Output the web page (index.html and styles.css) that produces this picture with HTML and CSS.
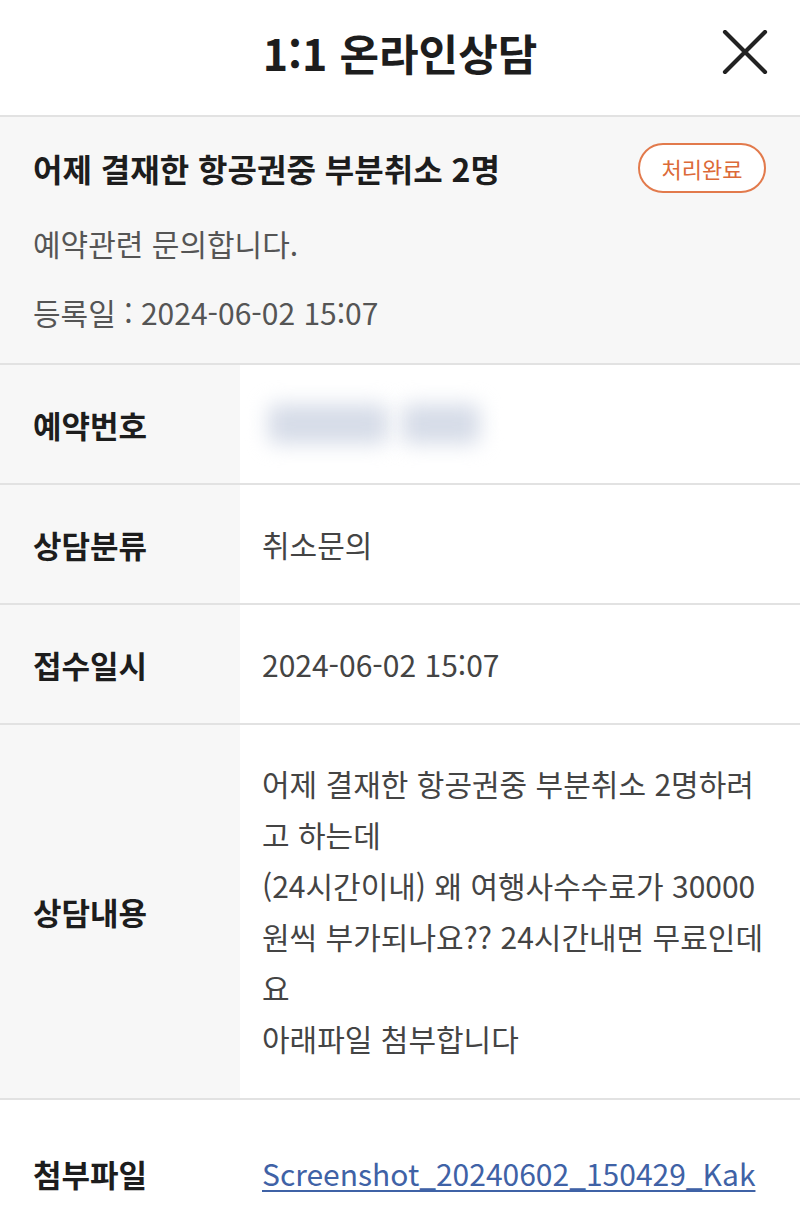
FILE: index.html
```html
<!DOCTYPE html>
<html lang="ko">
<head>
<meta charset="utf-8">
<title>1:1 온라인상담</title>
<link rel="stylesheet" href="styles.css">
</head>
<body>
<div class="page">
  <header class="topbar">
    <span></span>
    <h1 class="topbar-title">1:1 온라인상담</h1>
    <button class="close-btn" aria-label="닫기">
      <svg width="46" height="44" viewBox="0 0 46 44"><path d="M3 2 L43 42 M43 2 L3 42" stroke="#222" stroke-width="4.2" stroke-linecap="round" fill="none"/></svg>
    </button>
  </header>

  <section class="summary">
    <div class="summary-head">
      <h2 class="summary-title">어제 결재한 항공권중 부분취소 2명</h2>
      <span class="badge">처리완료</span>
    </div>
    <p class="summary-sub">예약관련 문의합니다.</p>
    <p class="summary-date">등록일 : 2024-06-02 15:07</p>
  </section>

  <div class="rows">
    <div class="row">
      <div class="label">예약번호</div>
      <div class="value"><span class="blur"><span class="blur-a"></span><span class="blur-b"></span></span></div>
    </div>
    <div class="row">
      <div class="label">상담분류</div>
      <div class="value">취소문의</div>
    </div>
    <div class="row">
      <div class="label">접수일시</div>
      <div class="value">2024-06-02 15:07</div>
    </div>
    <div class="row row-tall">
      <div class="label">상담내용</div>
      <div class="value value-multi">어제 결재한 항공권중 부분취소 2명하려<br>고 하는데<br>(24시간이내) 왜 여행사수수료가 30000<br>원씩 부가되나요?? 24시간내면 무료인데<br>요<br>아래파일 첨부합니다</div>
    </div>
    <div class="row row-last">
      <div class="label">첨부파일</div>
      <div class="value"><a class="file-link" href="#">Screenshot_20240602_150429_Kak</a></div>
    </div>
  </div>
</div>
</body>
</html>
```

FILE: styles.css
```css
* { box-sizing: border-box; }
html, body { margin: 0; padding: 0; background: #fff; }
body {
  font-family: "Noto Sans CJK KR", "Noto Sans", sans-serif;
  color: #222;
}
.page { width: 800px; overflow: hidden; }

.topbar {
  height: 117px;
  border-bottom: 2px solid #e2e2e2;
  display: grid;
  grid-template-columns: 1fr auto 1fr;
  align-items: center;
  padding-bottom: 12px;
}
.topbar-title {
  margin: 0;
  font-size: 43px;
  font-weight: 700;
  color: #1d1d1d;
  line-height: 50px;
}
.close-btn {
  justify-self: end;
  margin-right: 32px;
  padding: 0;
  border: 0;
  background: none;
  width: 46px;
  height: 44px;
  display: flex;
}

.summary {
  background: #f7f7f7;
  padding: 26px 34px 31px 33px;
  border-bottom: 2px solid #e2e2e2;
}
.summary-head {
  display: flex;
  justify-content: space-between;
  align-items: center;
  height: 50px;
}
.summary-title {
  margin: 0;
  font-size: 32px;
  font-weight: 700;
  color: #1d1d1d;
}
.badge {
  width: 128px;
  height: 50px;
  border: 2px solid #e27a4c;
  border-radius: 25px;
  background: #fff;
  color: #dc6a38;
  font-size: 22px;
  display: flex;
  align-items: center;
  justify-content: center;
}
.summary-sub, .summary-date {
  margin: 0;
  font-size: 30px;
  line-height: 40px;
  color: #555;
}
.summary-sub { margin-top: 30px; }
.summary-date { margin-top: 29px; }

.row {
  display: grid;
  grid-template-columns: 240px 1fr;
  border-bottom: 2px solid #e2e2e2;
  min-height: 120px;
}
.label {
  background: #f7f7f7;
  padding-left: 33px;
  display: flex;
  align-items: center;
  font-size: 31px;
  font-weight: 700;
  color: #1d1d1d;
}
.value {
  padding: 0 20px 0 22px;
  display: flex;
  align-items: center;
  font-size: 30px;
  color: #444;
}
.value-multi {
  display: block;
  padding-top: 33px;
  padding-bottom: 34px;
  line-height: 51px;
  white-space: nowrap;
}
.row-last { border-bottom: 0; min-height: 146px; }
.row-last .label { background: #fff; }

.blur {
  display: flex;
  gap: 14px;
  padding-left: 6px;
}
.blur-a, .blur-b {
  display: block;
  height: 40px;
  background: #d6dce8;
  filter: blur(10px);
  border-radius: 8px;
}
.blur-a { width: 120px; }
.blur-b { width: 78px; }

.file-link {
  color: #3f62a6;
  text-decoration: underline;
  text-underline-offset: 4px;
  text-decoration-thickness: 2px;
  white-space: nowrap;
}
```
